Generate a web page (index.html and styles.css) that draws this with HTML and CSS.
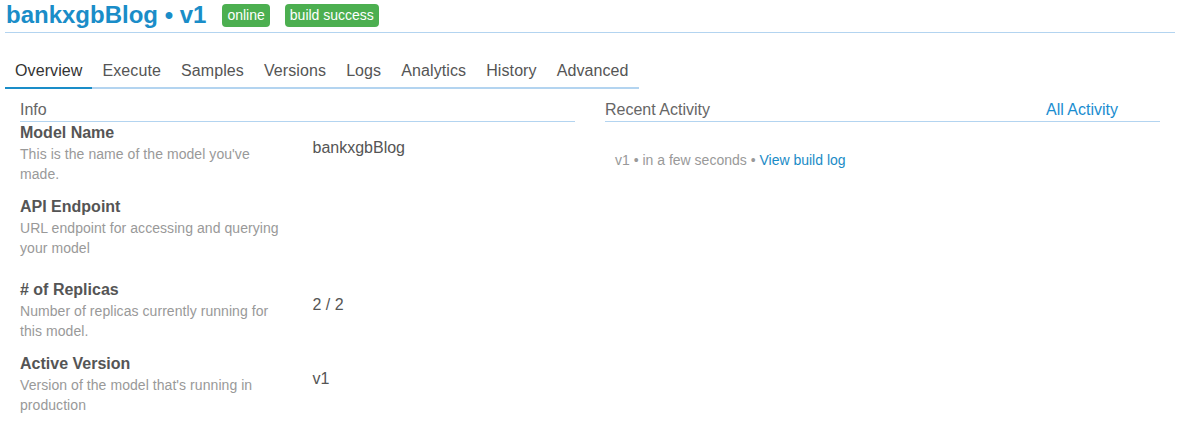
FILE: index.html
```html
<!DOCTYPE html>
<html lang="en">
<head>
<meta charset="utf-8">
<title>bankxgbBlog • v1</title>
<link rel="stylesheet" href="styles.css">
</head>
<body>
<div class="page">
  <header class="header">
    <h1 class="title">bankxgbBlog • v1</h1>
    <span class="badge">online</span>
    <span class="badge">build success</span>
  </header>

  <nav class="tabs">
    <a class="tab active" href="#">Overview</a>
    <a class="tab" href="#">Execute</a>
    <a class="tab" href="#">Samples</a>
    <a class="tab" href="#">Versions</a>
    <a class="tab" href="#">Logs</a>
    <a class="tab" href="#">Analytics</a>
    <a class="tab" href="#">History</a>
    <a class="tab" href="#">Advanced</a>
  </nav>

  <main class="columns">
    <section class="col">
      <div class="section-head">
        <span class="section-title">Info</span>
      </div>
      <div class="field">
        <div class="field-label">
          <div class="field-name">Model Name</div>
          <div class="field-desc">This is the name of the model you've made.</div>
        </div>
        <div class="field-value">bankxgbBlog</div>
      </div>
      <div class="field field-tall">
        <div class="field-label">
          <div class="field-name">API Endpoint</div>
          <div class="field-desc">URL endpoint for accessing and querying your model</div>
        </div>
        <div class="field-value"></div>
      </div>
      <div class="field">
        <div class="field-label">
          <div class="field-name"># of Replicas</div>
          <div class="field-desc">Number of replicas currently running for this model.</div>
        </div>
        <div class="field-value">2 / 2</div>
      </div>
      <div class="field">
        <div class="field-label">
          <div class="field-name">Active Version</div>
          <div class="field-desc">Version of the model that's running in production</div>
        </div>
        <div class="field-value">v1</div>
      </div>
    </section>

    <section class="col">
      <div class="section-head">
        <span class="section-title">Recent Activity</span>
        <a class="section-link" href="#">All Activity</a>
      </div>
      <div class="activity">
        <span class="muted">v1 • in a few seconds • </span><a class="link" href="#">View build log</a>
      </div>
    </section>
  </main>
</div>
</body>
</html>
```

FILE: styles.css
```css
* {
  box-sizing: border-box;
}

body {
  margin: 0;
  font-family: "Liberation Sans", Arial, sans-serif;
  font-size: 14px;
  line-height: 20px;
  color: #555;
  background: #fff;
}

.page {
  margin: 0 9px 0 5px;
}

.header {
  display: flex;
  align-items: flex-start;
  gap: 15px;
  padding: 1px 0 3px 1px;
  border-bottom: 1px solid #b3d4f0;
}

.title {
  margin: 0 1px 0 0;
  font-size: 24px;
  line-height: 28px;
  font-weight: bold;
  color: #1a8dc8;
}

.badge {
  display: inline-block;
  margin-top: 3px;
  padding: 2px 5px 2px;
  font-size: 14px;
  line-height: 19px;
  color: #fff;
  background: #4caf50;
  border-radius: 4px;
}

.tabs {
  display: inline-flex;
  margin-top: 22px;
  border-bottom: 2px solid #b3d4f0;
}

.tab {
  display: block;
  padding: 6px 10px;
  font-size: 16px;
  line-height: 20px;
  letter-spacing: 0.1px;
  color: #555;
  text-decoration: none;
}

.tab.active {
  color: #333;
  border-bottom: 2px solid #1a8dc8;
  margin-bottom: -2px;
}

.columns {
  display: flex;
  margin-top: 11px;
}

.col {
  width: 50%;
  padding: 0 15px;
}

.section-head {
  display: flex;
  justify-content: space-between;
  padding-bottom: 1px;
  border-bottom: 1px solid #b3d4f0;
  font-size: 16px;
  line-height: 20px;
}

.section-title {
  color: #666;
}

.section-link {
  padding-right: 42px;
  color: #1a8dd0;
  text-decoration: none;
}

.field {
  display: grid;
  grid-template-columns: 1fr 1fr;
  column-gap: 30px;
  margin-bottom: 12px;
}

.field-tall {
  margin-bottom: 21px;
}

.field-name {
  font-size: 16px;
  line-height: 22px;
  font-weight: bold;
  color: #555;
}

.field-desc {
  font-size: 14px;
  line-height: 20px;
  letter-spacing: 0.06px;
  color: #999;
}

.field-value {
  padding-top: 14.5px;
  font-size: 16px;
  line-height: 22px;
  color: #555;
}

.activity {
  margin-top: 28px;
  padding-left: 10px;
  font-size: 14px;
  line-height: 20px;
}

.muted {
  color: #999;
}

.link {
  color: #1a8bc6;
  text-decoration: none;
}
```
